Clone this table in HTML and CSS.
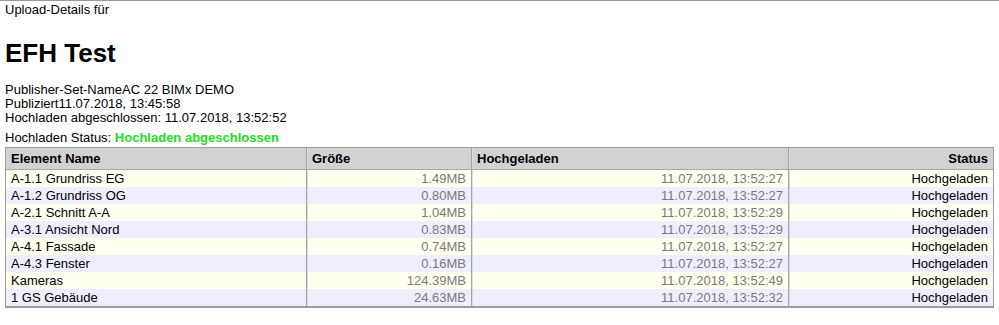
FILE: index.html
```html
<!DOCTYPE html>
<html lang="de">
<head>
<meta charset="utf-8">
<title>Upload-Details</title>
<link rel="stylesheet" href="styles.css">
</head>
<body>
<div class="page">
  <div class="line">Upload-Details für</div>
  <h1 class="title">EFH Test</h1>
  <div class="info">
    <div class="line">Publisher-Set-NameAC 22 BIMx DEMO</div>
    <div class="line">Publiziert11.07.2018, 13:45:58</div>
    <div class="line">Hochladen abgeschlossen: 11.07.2018, 13:52:52</div>
  </div>
  <div class="line status-line">Hochladen Status: <span class="ok">Hochladen abgeschlossen</span></div>
  <table class="uploads">
    <colgroup>
      <col class="c-name"><col class="c-size"><col class="c-date"><col class="c-status">
    </colgroup>
    <thead>
      <tr><th>Element Name</th><th>Größe</th><th>Hochgeladen</th><th class="r">Status</th></tr>
    </thead>
    <tbody>
      <tr><td>A-1.1 Grundriss EG</td><td class="num">1.49MB</td><td class="num">11.07.2018, 13:52:27</td><td class="r">Hochgeladen</td></tr>
      <tr><td>A-1.2 Grundriss OG</td><td class="num">0.80MB</td><td class="num">11.07.2018, 13:52:27</td><td class="r">Hochgeladen</td></tr>
      <tr><td>A-2.1 Schnitt A-A</td><td class="num">1.04MB</td><td class="num">11.07.2018, 13:52:29</td><td class="r">Hochgeladen</td></tr>
      <tr><td>A-3.1 Ansicht Nord</td><td class="num">0.83MB</td><td class="num">11.07.2018, 13:52:29</td><td class="r">Hochgeladen</td></tr>
      <tr><td>A-4.1 Fassade</td><td class="num">0.74MB</td><td class="num">11.07.2018, 13:52:27</td><td class="r">Hochgeladen</td></tr>
      <tr><td>A-4.3 Fenster</td><td class="num">0.16MB</td><td class="num">11.07.2018, 13:52:27</td><td class="r">Hochgeladen</td></tr>
      <tr><td>Kameras</td><td class="num">124.39MB</td><td class="num">11.07.2018, 13:52:49</td><td class="r">Hochgeladen</td></tr>
      <tr><td>1 GS Gebäude</td><td class="num">24.63MB</td><td class="num">11.07.2018, 13:52:32</td><td class="r">Hochgeladen</td></tr>
    </tbody>
  </table>
</div>
</body>
</html>
```
FILE: styles.css
```css
html, body {
  margin: 0;
  padding: 0;
  background: #ffffff;
}

body {
  font-family: "Liberation Sans", Arial, Helvetica, sans-serif;
  font-size: 13px;
  color: #000000;
}

.page {
  border-top: 1px solid #9a9a9a;
  padding: 2px 5px 0 5px;
}

.line {
  line-height: 14px;
}

.title {
  font-size: 26px;
  font-weight: bold;
  line-height: 30px;
  margin: 21px 0 15px 0;
}

.status-line {
  margin-top: 6px;
}

.ok {
  color: #22dd22;
  font-weight: bold;
}

.uploads {
  width: 100%;
  margin-top: 2px;
  border-collapse: separate;
  border-spacing: 0;
  border: 1px solid #9c9c9c;
  border-bottom-width: 2px;
  table-layout: fixed;
  font-size: 13px;
}

.c-name { width: 300px; }
.c-size { width: 165px; }
.c-date { width: 317px; }

.uploads th {
  background: #d2d2d2;
  font-weight: bold;
  text-align: left;
  padding: 3px 5px;
  line-height: 15px;
  border-bottom: 1px solid #a8a8a8;
}

.uploads td {
  padding: 1px 5px;
  line-height: 15px;
  white-space: nowrap;
}

.uploads th + th,
.uploads td + td {
  border-left: 1px solid #a4a4a4;
  box-shadow: inset 1px 0 0 #dcdcdc;
}

.uploads th.r,
.uploads td.r {
  text-align: right;
}

.uploads td.num {
  text-align: right;
  color: #7a7a7a;
}

.uploads tbody tr:nth-child(odd) td {
  background: #fffff0;
}

.uploads tbody tr:nth-child(even) td {
  background: #eeeefe;
}
```
